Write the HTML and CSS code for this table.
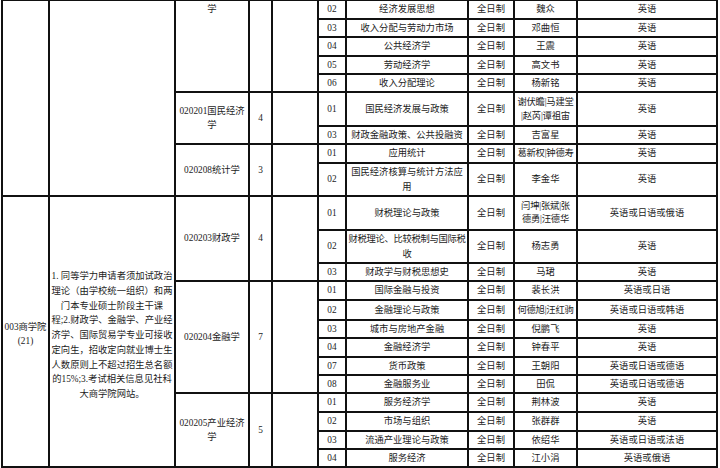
FILE: index.html
```html
<!DOCTYPE html>
<html lang="zh-CN">
<head>
<meta charset="utf-8">
<title>招生目录</title>
<link rel="stylesheet" href="styles.css">
</head>
<body>
<div class="page">
<table class="catalog">
  <colgroup>
    <col class="c-college">
    <col class="c-notes">
    <col class="c-major">
    <col class="c-count">
    <col class="c-blank">
    <col class="c-code">
    <col class="c-dir">
    <col class="c-mode">
    <col class="c-tutor">
    <col class="c-lang">
  </colgroup>
  <tbody>
    <tr class="h19">
      <td rowspan="9"></td>
      <td rowspan="9"></td>
      <td rowspan="5" class="top">学</td>
      <td rowspan="5"></td>
      <td rowspan="5"></td>
      <td>02</td><td>经济发展思想</td><td>全日制</td><td>魏众</td><td>英语</td>
    </tr>
    <tr class="h18"><td>03</td><td>收入分配与劳动力市场</td><td>全日制</td><td>邓曲恒</td><td>英语</td></tr>
    <tr class="h19"><td>04</td><td>公共经济学</td><td>全日制</td><td>王震</td><td>英语</td></tr>
    <tr class="h18"><td>05</td><td>劳动经济学</td><td>全日制</td><td>高文书</td><td>英语</td></tr>
    <tr class="h18"><td>06</td><td>收入分配理论</td><td>全日制</td><td>杨新铭</td><td>英语</td></tr>
    <tr class="h34">
      <td rowspan="2">020201国民经济<br>学</td>
      <td rowspan="2">4</td>
      <td rowspan="2"></td>
      <td>01</td><td>国民经济发展与政策</td><td>全日制</td><td class="tight">谢伏瞻|马建堂<br>|赵芮|谭祖宙</td><td>英语</td>
    </tr>
    <tr class="h18"><td>03</td><td>财政金融政策、公共投融资</td><td>全日制</td><td>吉富星</td><td>英语</td></tr>
    <tr class="h19">
      <td rowspan="2">020208统计学</td>
      <td rowspan="2">3</td>
      <td rowspan="2"></td>
      <td>01</td><td>应用统计</td><td>全日制</td><td class="tight">葛新权|钟德寿</td><td>英语</td>
    </tr>
    <tr class="h33"><td>02</td><td>国民经济核算与统计方法应<br>用</td><td>全日制</td><td>李金华</td><td>英语</td></tr>
    <tr class="h34">
      <td rowspan="13" class="college">003商学院<br>(21)</td>
      <td rowspan="13" class="notes">1. 同等学力申请者须加试政治<br>理论（由学校统一组织）和两<br>门本专业硕士阶段主干课<br>程;2.财政学、金融学、产业经<br>济学、国际贸易学专业可接收<br>定向生，招收定向就业博士生<br>人数原则上不超过招生总名额<br>的15%;3.考试相关信息见社科<br>大商学院网站。</td>
      <td rowspan="3">020203财政学</td>
      <td rowspan="3">4</td>
      <td rowspan="3"></td>
      <td>01</td><td>财税理论与政策</td><td>全日制</td><td class="tight two">闫坤|张斌|张<br>德勇|汪德华</td><td>英语或日语或俄语</td>
    </tr>
    <tr class="h33"><td>02</td><td class="squeeze">财税理论、比较税制与国际税<br>收</td><td>全日制</td><td>杨志勇</td><td>英语</td></tr>
    <tr class="h18"><td>03</td><td>财政学与财税思想史</td><td>全日制</td><td>马珺</td><td>英语</td></tr>
    <tr class="h19">
      <td rowspan="6">020204金融学</td>
      <td rowspan="6">7</td>
      <td rowspan="6"></td>
      <td>01</td><td>国际金融与投资</td><td>全日制</td><td>裴长洪</td><td>英语或日语</td>
    </tr>
    <tr class="h20"><td>02</td><td>金融理论与政策</td><td>全日制</td><td class="tight">何德旭|汪红驹</td><td>英语或日语或韩语</td></tr>
    <tr class="h18"><td>03</td><td>城市与房地产金融</td><td>全日制</td><td>倪鹏飞</td><td>英语</td></tr>
    <tr class="h19"><td>04</td><td>金融经济学</td><td>全日制</td><td>钟春平</td><td>英语</td></tr>
    <tr class="h18"><td>07</td><td>货币政策</td><td>全日制</td><td>王朝阳</td><td>英语或日语或德语</td></tr>
    <tr class="h18"><td>08</td><td>金融服务业</td><td>全日制</td><td>田侃</td><td>英语或日语或德语</td></tr>
    <tr class="h19">
      <td rowspan="4">020205产业经济<br>学</td>
      <td rowspan="4">5</td>
      <td rowspan="4"></td>
      <td>01</td><td>服务经济学</td><td>全日制</td><td>荆林波</td><td>英语</td>
    </tr>
    <tr class="h19"><td>02</td><td>市场与组织</td><td>全日制</td><td>张群群</td><td>英语</td></tr>
    <tr class="h18"><td>03</td><td>流通产业理论与政策</td><td>全日制</td><td>依绍华</td><td>英语或日语或法语</td></tr>
    <tr class="h18"><td>04</td><td>服务经济</td><td>全日制</td><td>江小涓</td><td>英语或俄语</td></tr>
  </tbody>
</table>
</div>
</body>
</html>
```
FILE: styles.css
```css
html, body {
  margin: 0;
  padding: 0;
  background: #fff;
}
.page {
  width: 720px;
  height: 468px;
  overflow: hidden;
}
.catalog {
  margin-top: -1px;
  margin-left: 1px;
  width: 715px;
  table-layout: fixed;
  border-collapse: collapse;
  font-family: "Liberation Serif", "Noto Sans CJK SC", serif;
  font-size: 9.3px;
  line-height: 14.5px;
  color: #1c1c1c;
}
.catalog td {
  border: 2px solid #111;
  padding: 0 1px;
  text-align: center;
  vertical-align: middle;
  white-space: nowrap;
  overflow: visible;
}
.c-college { width: 47px; }
.c-notes { width: 126px; }
.c-major { width: 74px; }
.c-count { width: 23px; }
.c-blank { width: 46px; }
.c-code { width: 28px; }
.c-dir { width: 122px; }
.c-mode { width: 46px; }
.c-tutor { width: 63px; }
.c-lang { width: 140px; }

.h18 td { height: 16px; }
.h19 td { height: 17px; }
.h20 td { height: 18px; }
.h33 td { height: 31px; }
.h34 td { height: 32px; }

.catalog td.top {
  vertical-align: top;
  padding-top: 1px;
}
.catalog td.tight {
  padding: 0;
  letter-spacing: -0.2px;
}
.catalog td.two {
  line-height: 13px;
}
.catalog td.squeeze {
  padding: 0;
  letter-spacing: -0.3px;
}
.catalog td.college {
  line-height: 14px;
  padding-top: 4px;
}
.catalog td.notes {
  padding: 8px 1px 0;
  line-height: 14.7px;
}
```
